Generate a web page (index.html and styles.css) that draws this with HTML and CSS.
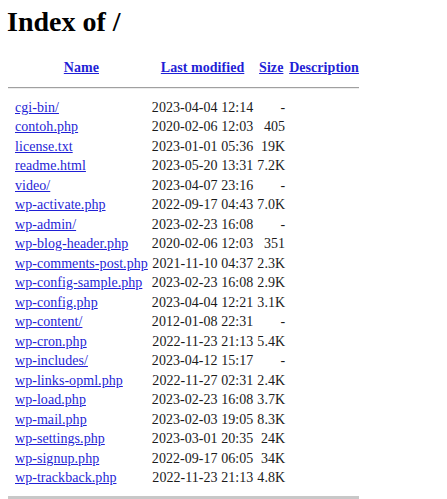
FILE: index.html
```html
<!DOCTYPE html>
<html>
<head>
<meta charset="utf-8">
<title>Index of /</title>
<link rel="stylesheet" href="styles.css">
</head>
<body>
<h1 class="title">Index of /</h1>
<table class="listing">
<tr><th class="n"><a href="#">Name</a></th><th><a href="#">Last modified</a></th><th><a href="#">Size</a></th><th><a href="#">Description</a></th></tr>
<tr><th colspan="4" class="rule-cell"><hr class="rule"></th></tr>
<tr><td class="n"><a href="#">cgi-bin/</a></td><td class="r">2023-04-04 12:14</td><td class="r">-</td><td>&nbsp;</td></tr>
<tr><td class="n"><a href="#">contoh.php</a></td><td class="r">2020-02-06 12:03</td><td class="r">405</td><td>&nbsp;</td></tr>
<tr><td class="n"><a href="#">license.txt</a></td><td class="r">2023-01-01 05:36</td><td class="r">19K</td><td>&nbsp;</td></tr>
<tr><td class="n"><a href="#">readme.html</a></td><td class="r">2023-05-20 13:31</td><td class="r">7.2K</td><td>&nbsp;</td></tr>
<tr><td class="n"><a href="#">video/</a></td><td class="r">2023-04-07 23:16</td><td class="r">-</td><td>&nbsp;</td></tr>
<tr><td class="n"><a href="#">wp-activate.php</a></td><td class="r">2022-09-17 04:43</td><td class="r">7.0K</td><td>&nbsp;</td></tr>
<tr><td class="n"><a href="#">wp-admin/</a></td><td class="r">2023-02-23 16:08</td><td class="r">-</td><td>&nbsp;</td></tr>
<tr><td class="n"><a href="#">wp-blog-header.php</a></td><td class="r">2020-02-06 12:03</td><td class="r">351</td><td>&nbsp;</td></tr>
<tr><td class="n"><a href="#">wp-comments-post.php</a></td><td class="r">2021-11-10 04:37</td><td class="r">2.3K</td><td>&nbsp;</td></tr>
<tr><td class="n"><a href="#">wp-config-sample.php</a></td><td class="r">2023-02-23 16:08</td><td class="r">2.9K</td><td>&nbsp;</td></tr>
<tr><td class="n"><a href="#">wp-config.php</a></td><td class="r">2023-04-04 12:21</td><td class="r">3.1K</td><td>&nbsp;</td></tr>
<tr><td class="n"><a href="#">wp-content/</a></td><td class="r">2012-01-08 22:31</td><td class="r">-</td><td>&nbsp;</td></tr>
<tr><td class="n"><a href="#">wp-cron.php</a></td><td class="r">2022-11-23 21:13</td><td class="r">5.4K</td><td>&nbsp;</td></tr>
<tr><td class="n"><a href="#">wp-includes/</a></td><td class="r">2023-04-12 15:17</td><td class="r">-</td><td>&nbsp;</td></tr>
<tr><td class="n"><a href="#">wp-links-opml.php</a></td><td class="r">2022-11-27 02:31</td><td class="r">2.4K</td><td>&nbsp;</td></tr>
<tr><td class="n"><a href="#">wp-load.php</a></td><td class="r">2023-02-23 16:08</td><td class="r">3.7K</td><td>&nbsp;</td></tr>
<tr><td class="n"><a href="#">wp-mail.php</a></td><td class="r">2023-02-03 19:05</td><td class="r">8.3K</td><td>&nbsp;</td></tr>
<tr><td class="n"><a href="#">wp-settings.php</a></td><td class="r">2023-03-01 20:35</td><td class="r">24K</td><td>&nbsp;</td></tr>
<tr><td class="n"><a href="#">wp-signup.php</a></td><td class="r">2022-09-17 06:05</td><td class="r">34K</td><td>&nbsp;</td></tr>
<tr><td class="n"><a href="#">wp-trackback.php</a></td><td class="r">2022-11-23 21:13</td><td class="r">4.8K</td><td>&nbsp;</td></tr>
<tr><th colspan="4" class="rule-cell"><hr class="rule rule-bottom"></th></tr>
</table>
</body>
</html>
```

FILE: styles.css
```css
html, body {
  background: #fff;
}
body {
  margin: 0;
  padding: 0 5px;
  font-family: "Liberation Serif", "Times New Roman", serif;
  font-size: 14px;
  color: #1a1a1a;
}
.title {
  font-size: 28px;
  font-weight: bold;
  margin: 6px 0 19px 2px;
  color: #000;
  line-height: 32px;
}
.listing {
  border-spacing: 2px;
  letter-spacing: 0.05px;
}
.listing td, .listing th {
  padding: 1px;
  line-height: 15.5px;
}
.listing .n {
  padding-left: 8px;
}
.listing a {
  color: #1f1fd6;
}
.r {
  text-align: right;
}
.rule-cell {
  padding: 1px;
}
.rule {
  margin: 7px 0;
  border: 0;
  border-top: 1px solid #a0a0a0;
  border-bottom: 1px solid #ececec;
}
.rule-bottom {
  margin-top: 6px;
  border-top: 3px solid #c8c8c8;
  border-bottom: 0;
}
```
